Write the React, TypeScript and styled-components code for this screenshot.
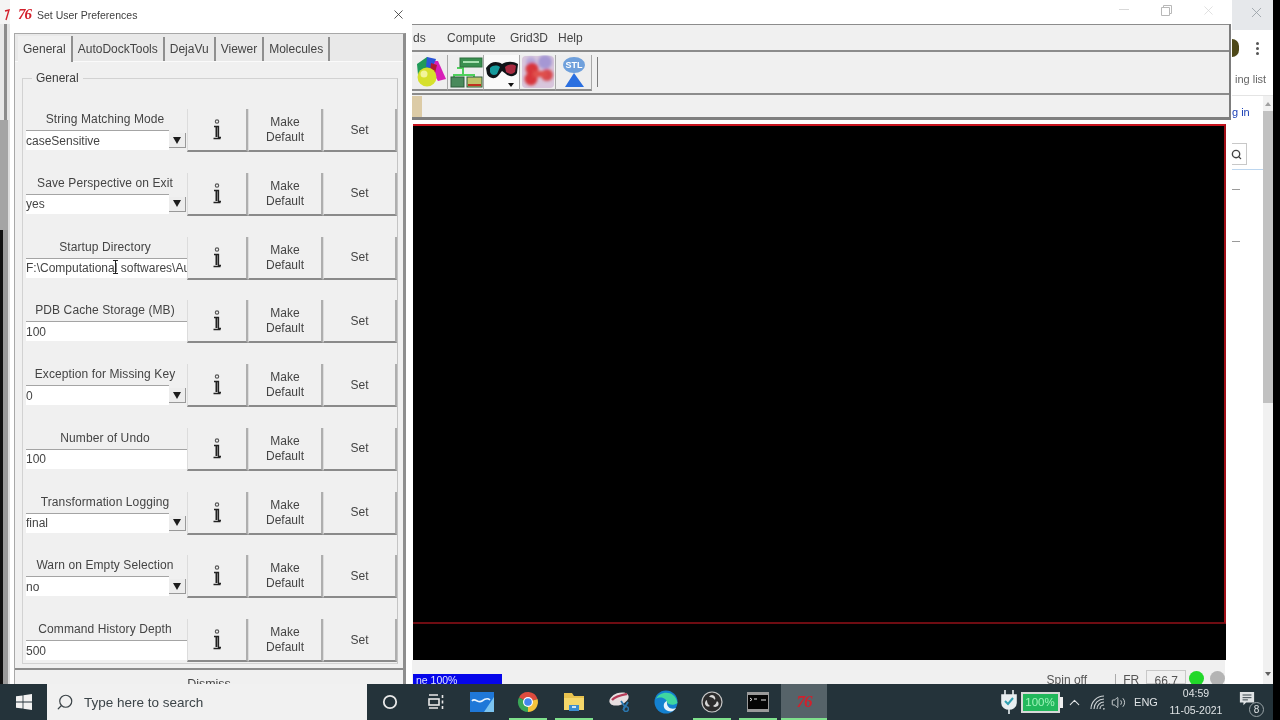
import React from 'react';
import styled, { createGlobalStyle } from 'styled-components';
import { Search, X, ChevronUp, Volume2 } from 'lucide-react';

const GlobalStyle = createGlobalStyle`
  html, body {
    margin: 0;
    padding: 0;
    background: #000;
  }
  * {
    box-sizing: border-box;
  }
`;

const Screen = styled.div`
  width: 1280px;
  height: 720px;
  display: flex;
  overflow: hidden;
  background: #000;
  font-family: "Liberation Sans", Arial, sans-serif;
  color: #3c3c3c;
  filter: blur(0.5px);
`;

const Workspace = styled.div`
  width: 1273px;
  display: flex;
  flex-direction: column;
`;

const Desk = styled.div`
  height: 684px;
  display: flex;
  overflow: hidden;
`;

const Sliver = styled.div`
  width: 10px;
  flex: none;
  display: flex;
  flex-direction: column;
`;

const SliverTop = styled.div`
  height: 24px;
  background: #f4f4f4;
`;

const SliverMid = styled.div`
  height: 96px;
  background: linear-gradient(90deg, #e8e8e8 0 4px, #8c8c8c 4px 7px, #e4e4e4 7px);
`;

const SliverGrey = styled.div`
  height: 110px;
  background: linear-gradient(90deg, #a4a4a4 0 8px, #dcdcdc 8px);
`;

const SliverBottom = styled.div`
  flex: 1;
  background: linear-gradient(90deg, #101010 0 3px, #9a9a9a 3px 8px, #dcdcdc 8px);
`;

/* preferences dialog */
const Dialog = styled.div`
  width: 402px;
  flex: none;
  background: #fff;
  padding: 0 6px 0 4px;
  display: flex;
  flex-direction: column;
`;

const TitleBar = styled.div`
  height: 33px;
  flex: none;
  margin: 0 -6px 0 -4px;
  padding: 0 6px 4px 8px;
  display: flex;
  align-items: center;
  font-size: 10.5px;
  color: #404040;
`;

const FeatherLogo = styled.span<{ $size: number }>`
  font-family: "Liberation Serif", serif;
  font-style: italic;
  font-weight: bold;
  font-size: ${p => p.$size}px;
  letter-spacing: -1px;
  color: #d3202c;
`;

const TitleText = styled.span`
  margin-left: 6px;
  flex: 1;
`;

const Panel = styled.div`
  flex: 1;
  border: 1px solid #a8a8a8;
  border-right: 3px solid #8e8e8e;
  background: #f0f0f0;
  display: flex;
  flex-direction: column;
`;

const TabStrip = styled.div`
  height: 28px;
  flex: none;
  padding-left: 3px;
  display: flex;
  align-items: flex-end;
  background: #e9e9e9;
  border-bottom: 1px solid #fafafa;
`;

const Tab = styled.div<{ $active?: boolean }>`
  height: ${p => (p.$active ? 26 : 24)}px;
  padding: 0 5px;
  margin-bottom: ${p => (p.$active ? -1 : 0)}px;
  display: flex;
  align-items: center;
  background: ${p => (p.$active ? '#f0f0f0' : '#e9e9e9')};
  border-right: 2px solid #8f8f8f;
  font-size: 12px;
  color: #444;
`;

const PanelBody = styled.div`
  flex: 1;
  padding: 9px 5px 0 7px;
  display: flex;
  flex-direction: column;
`;

const Group = styled.fieldset`
  margin: 0;
  padding: 0 0 3px 3px;
  min-width: 0;
  border: 1px solid #d2d2d2;
  border-right: 1px solid #c4c4c4;
`;

const GroupLegend = styled.legend`
  margin-left: 6px;
  padding: 0 4px;
  font-size: 12px;
  line-height: 14px;
  color: #3c3c3c;
`;

const RowList = styled.div`
  margin-top: 23px;
  display: flex;
  flex-direction: column;
  gap: 21.75px;
`;

const PrefRow = styled.div`
  height: 42px;
  display: flex;
  position: relative;
`;

const PrefField = styled.div`
  width: 161px;
  flex: none;
  display: flex;
  flex-direction: column;
`;

const PrefLabel = styled.div`
  height: 22px;
  padding-right: 3px;
  line-height: 22px;
  text-align: center;
  font-size: 12px;
  letter-spacing: 0.1px;
  white-space: nowrap;
  color: #444;
`;

const FieldBox = styled.div`
  height: 20px;
  display: flex;
  align-items: center;
  overflow: hidden;
  background: #fff;
  border-top: 1px solid #a4a4a4;
  font-size: 12px;
  white-space: nowrap;
  color: #444;
`;

const ComboRow = styled.div`
  display: flex;
  align-items: flex-end;
`;

const ComboArrow = styled.div`
  width: 17px;
  height: 15px;
  flex: none;
  margin: 0 1px 2px 0;
  background: #ededed;
  border-right: 1px solid #999;
  border-bottom: 1px solid #999;
  display: flex;
  align-items: center;
  justify-content: center;

  &::after {
    content: '';
    border-left: 4px solid transparent;
    border-right: 4px solid transparent;
    border-top: 7px solid #1c1c1c;
  }
`;

const ButtonGroup = styled.div`
  flex: 1;
  margin-top: 1px;
  display: grid;
  grid-template-columns: 61px 75px 74px;
`;

const PrefButton = styled.div`
  height: 43px;
  padding-top: 1px;
  display: flex;
  align-items: center;
  justify-content: center;
  text-align: center;
  font-size: 12px;
  line-height: 15px;
  color: #444;
  background: #f0f0f0;
  border-left: 1px solid #dcdcdc;
  border-right: 2px solid #aeaeae;
  border-bottom: 2px solid #8a8a8a;
`;

const Cursor = styled.svg`
  position: absolute;
  left: 86px;
  top: 24px;
`;

const DismissBar = styled.div`
  margin: 4px -5px 0 -7px;
  padding-top: 7px;
  border-top: 2px solid #8c8c8c;
  text-align: center;
  font-size: 12.5px;
  color: #444;
`;

/* main application window */
const AppWindow = styled.div`
  width: 820px;
  flex: none;
  background: #fff;
  display: flex;
  flex-direction: column;
`;

const WindowControls = styled.div`
  height: 24px;
  flex: none;
  padding-right: 3px;
  display: flex;
  justify-content: flex-end;
  align-items: flex-start;
`;

const WindowControl = styled.div`
  width: 42px;
  height: 20px;
  display: flex;
  align-items: center;
  justify-content: center;
  color: #cfcfcf;
`;

const ChromeStack = styled.div`
  height: 96px;
  flex: none;
  margin-right: 1px;
  border-right: 2px solid #7d7d7d;
  border-bottom: 3px solid #7f7f7f;
  display: flex;
  flex-direction: column;
  background: #f0f0f0;
`;

const MenuBar = styled.div`
  height: 28px;
  flex: none;
  display: flex;
  align-items: center;
  border-top: 1px solid #8c8c8c;
  border-bottom: 2px solid #8c8c8c;
  font-size: 12px;
  color: #444;
`;

const MenuItem = styled.span<{ $w: number; $inset?: number }>`
  width: ${p => p.$w}px;
  padding-left: ${p => p.$inset ?? 0}px;
  flex: none;
`;

const ToolBar = styled.div`
  height: 43px;
  flex: none;
  padding-top: 3px;
  display: flex;
  align-items: flex-start;
  border-bottom: 2px solid #8c8c8c;
`;

const ToolCell = styled.div<{ $light?: boolean }>`
  width: 36px;
  height: 36px;
  flex: none;
  display: flex;
  align-items: center;
  justify-content: center;
  background: ${p => (p.$light ? '#fafafa' : '#eeeeee')};
  border-bottom: 2px solid #8c8c8c;
  border-right: 1px solid #a8a8a8;
`;

const ToolGrip = styled.div`
  width: 1px;
  height: 30px;
  margin: 2px 0 0 5px;
  background: #7c7c7c;
`;

const InfoStrip = styled.div`
  flex: 1;
  display: flex;
  padding-top: 1px;
`;

const TanSwatch = styled.div`
  width: 10px;
  background: #dccba6;
`;

const CanvasArea = styled.div`
  height: 536px;
  flex: none;
  margin: 4px 6px 0 1px;
  background: #000;
`;

const RedFrame = styled.div`
  height: 500px;
  border-top: 2px solid #c8141e;
  border-right: 2px solid #a01018;
  border-bottom: 2px solid #6e0c12;
`;

const StatusBar = styled.div`
  flex: 1;
  background: #f0f0f0;
  margin-right: 7px;
  padding: 14px 0 0 1px;
  display: flex;
  overflow: hidden;
  font-size: 12px;
  color: #555;
`;

const ProgressBar = styled.div`
  width: 89px;
  height: 14px;
  padding-left: 3px;
  line-height: 12px;
  font-size: 10.5px;
  color: #dfe4ff;
  background: #0606ea;
`;

const SpinBox = styled.div`
  width: 70px;
  margin-left: 545px;
  white-space: nowrap;
  line-height: 12px;
  border-right: 1px solid #aaa;
`;

const FrameRate = styled.div`
  display: flex;
  gap: 7px;
  margin-left: 7px;
  line-height: 12px;
`;

const RateBox = styled.div`
  width: 40px;
  margin-top: -4px;
  padding-top: 4px;
  text-align: center;
  border: 1px solid #c8c8c8;
`;

const Lamp = styled.div<{ $color: string }>`
  width: 15px;
  height: 15px;
  margin: -3px 0 0 ${p => (p.$color === 'green' ? 3 : 6)}px;
  border-radius: 50%;
  background: ${p => (p.$color === 'green' ? '#22d82a' : '#b4b4b4')};
`;

/* browser window behind */
const Browser = styled.div`
  width: 41px;
  flex: none;
  display: flex;
  flex-direction: column;
  background: #fff;
`;

const BrowserTabs = styled.div`
  height: 30px;
  flex: none;
  padding: 4px 8px 0 0;
  display: flex;
  justify-content: flex-end;
  align-items: flex-start;
  color: #9aa0a6;
  background: #e6e8eb;
`;

const BrowserTools = styled.div`
  height: 36px;
  flex: none;
  padding: 0 14px 0 0;
  display: flex;
  align-items: center;
  justify-content: space-between;
`;

const Avatar = styled.div`
  width: 7px;
  height: 18px;
  border-radius: 0 9px 9px 0;
  background: #4e4818;
`;

const Kebab = styled.div`
  display: flex;
  flex-direction: column;
  gap: 2px;

  span {
    width: 3px;
    height: 3px;
    border-radius: 50%;
    background: #555;
  }
`;

const BookmarkBar = styled.div`
  height: 30px;
  flex: none;
  padding: 7px 0 0 3px;
  border-bottom: 1px solid #e4e4e4;
  font-size: 11px;
  color: #666;
  white-space: nowrap;
  overflow: hidden;
`;

const BrowserPage = styled.div`
  flex: 1;
  display: flex;
`;

const PageColumn = styled.div`
  width: 31px;
  flex: none;
  padding-top: 10px;
  display: flex;
  flex-direction: column;
`;

const LinkText = styled.div`
  font-size: 11px;
  line-height: 13px;
  color: #1a3fb5;
`;

const SearchBox = styled.div`
  width: 15px;
  height: 22px;
  margin-top: 24px;
  display: flex;
  align-items: center;
  border: 1px solid #c8c8c8;
  border-left: none;
  color: #444;
`;

const SearchMark = styled(Search)`
  margin-left: -1px;
`;

const BlueRule = styled.div`
  height: 1px;
  margin-top: 4px;
  background: #bcd6ef;
`;

const Tick = styled.div<{ $top: number }>`
  width: 8px;
  height: 1px;
  margin-top: ${p => p.$top}px;
  background: #9a9a9a;
`;

const Scrollbar = styled.div`
  width: 10px;
  flex: none;
  display: flex;
  flex-direction: column;
  align-items: center;
  background: #f1f1f1;
`;

const ScrollUp = styled.div`
  height: 15px;
  padding-top: 6px;

  &::after {
    content: '';
    display: block;
    border-left: 3px solid transparent;
    border-right: 3px solid transparent;
    border-bottom: 4px solid #a0a0a0;
  }
`;

const ScrollThumb = styled.div`
  width: 100%;
  height: 292px;
  background: #c1c1c1;
`;

const ScrollDown = styled.div`
  margin-top: auto;
  margin-bottom: 8px;
  border-left: 3px solid transparent;
  border-right: 3px solid transparent;
  border-top: 4px solid #606060;
`;

/* taskbar */
const Taskbar = styled.div`
  height: 36px;
  flex: none;
  display: flex;
  background: #24333a;
  color: #e6e6e6;
`;

const StartButton = styled.div`
  width: 47px;
  flex: none;
  display: flex;
  align-items: center;
  justify-content: center;
`;

const SearchField = styled.div`
  width: 320px;
  flex: none;
  padding-left: 9px;
  display: flex;
  align-items: center;
  gap: 10px;
  background: #f1f1f1;
  color: #3c4448;
  font-size: 13.5px;
`;

const SearchGlass = styled(Search)`
  transform: scaleX(-1);
`;

const TaskButton = styled.div<{ $running?: boolean; $active?: boolean }>`
  width: 46px;
  flex: none;
  display: flex;
  align-items: center;
  justify-content: center;
  position: relative;
  background: ${p => (p.$active ? '#566369' : 'transparent')};

  &::after {
    content: '';
    display: ${p => (p.$running ? 'block' : 'none')};
    position: absolute;
    bottom: 0;
    left: ${p => (p.$active ? 0 : 4)}px;
    right: ${p => (p.$active ? 0 : 4)}px;
    height: 2px;
    background: #7fe08c;
  }
`;

const Tray = styled.div`
  margin-left: auto;
  display: flex;
  align-items: center;
  padding-right: 1px;
`;

const TrayCell = styled.div<{ $w: number }>`
  width: ${p => p.$w}px;
  flex: none;
  display: flex;
  align-items: center;
  justify-content: center;
  color: #dfe3e5;
`;

const BatteryShell = styled.div`
  width: 39px;
  height: 21px;
  padding: 1px;
  background: #22b85c;
  border: 2px solid #d8d8d8;
  position: relative;
  text-align: center;
  font-size: 11.5px;
  line-height: 14px;
  color: #a0f4ba;

  &::after {
    content: '';
    position: absolute;
    right: -5px;
    top: 3px;
    width: 3px;
    height: 11px;
    background: #f0f0f0;
  }
`;

const EngLabel = styled.span`
  font-size: 11px;
`;

const Clock = styled.div`
  font-size: 10.5px;
  line-height: 17px;
  text-align: center;
  white-space: nowrap;
`;

const NotifyWrap = styled.div`
  position: relative;
  height: 22px;
  width: 22px;
`;

const NotifyBadge = styled.div`
  position: absolute;
  right: -3px;
  bottom: -4px;
  width: 15px;
  height: 15px;
  border-radius: 50%;
  background: #24333a;
  border: 1px solid #9aa4a8;
  text-align: center;
  font-size: 10px;
  line-height: 13px;
`;

/* drawings */
const InfoGlyph = () => (
  <svg width="10" height="22" viewBox="0 0 10 22">
    <circle cx="5" cy="2.6" r="1.7" fill="none" stroke="#555" strokeWidth="1.1" />
    <path d="M2 7.5H6.5V18.5H9M1.5 19.5H8.5" fill="none" stroke="#222" strokeWidth="1.3" />
    <path d="M4.5 8V18" stroke="#222" strokeWidth="2" />
  </svg>
);

const SliverMark = () => (
  <svg width="10" height="24" viewBox="0 0 10 24">
    <path d="M5 11L9 10L6 20" fill="none" stroke="#d3202c" strokeWidth="1.4" />
  </svg>
);

const ShapesIcon = () => (
  <svg width="32" height="34" viewBox="0 0 32 34">
    <polygon points="3,9 13,2 19,6 15,20 4,20" fill="#1f9a58" />
    <polygon points="13,2 22,4 19,14 12,12" fill="#2a55d8" />
    <polygon points="21,6 24,6 32,24 24,26 18,16" fill="#d81fb8" />
    <polygon points="17,8 23,10 21,18 16,16" fill="#b01830" />
    <circle cx="13" cy="22" r="9.5" fill="#d6e02c" />
    <circle cx="10" cy="19" r="3.5" fill="#f2f59a" />
  </svg>
);

const TreeIcon = () => (
  <svg width="34" height="32" viewBox="0 0 34 32">
    <path d="M8 12H14V19H5V22M14 19H25V22M14 8V12" fill="none" stroke="#4fd05c" strokeWidth="2" />
    <rect x="11" y="2" width="22" height="9" fill="#3a9050" stroke="#2c6e3c" />
    <rect x="14" y="5" width="16" height="2" fill="#a7e0b0" />
    <rect x="2" y="21" width="13" height="10" fill="#4a8a5c" stroke="#2c5a3a" />
    <rect x="18" y="21" width="15" height="10" fill="#bfc26a" stroke="#2c5a3a" />
    <rect x="19" y="28" width="13" height="2" fill="#c03020" />
  </svg>
);

const GlassesIcon = () => (
  <svg width="34" height="34" viewBox="0 0 34 34">
    <path d="M1 13C6 6 12 6 17 9C22 6 28 6 33 9L32 18C30 22 24 22 21 19L17 16L13 21C9 25 4 23 2 19Z" fill="#101418" />
    <path d="M5 13C8 10 12 10 15 12L12 19C9 21 6 20 5 17Z" fill="#159a9c" />
    <path d="M20 12C24 9 28 9 31 11L30 17C27 20 24 19 21 17Z" fill="#a82a40" />
    <polygon points="23,28 29,28 26,32" fill="#111" />
  </svg>
);

const MoleculeIcon = () => (
  <svg width="34" height="34" viewBox="0 0 34 34">
    <defs>
      <filter id="soft" x="-20%" y="-20%" width="140%" height="140%">
        <feGaussianBlur stdDeviation="1.4" />
      </filter>
    </defs>
    <rect x="1" y="1" width="32" height="32" rx="4" fill="#d8c6dc" />
    <g filter="url(#soft)">
      <circle cx="24" cy="7" r="7" fill="#8f83d0" opacity="0.7" />
      <circle cx="10" cy="7" r="5" fill="#9f93d8" opacity="0.6" />
      <circle cx="11" cy="14" r="6.5" fill="#d8343a" />
      <circle cx="10" cy="24" r="6.5" fill="#d8343a" />
      <circle cx="26" cy="20" r="6" fill="#d8464c" />
      <rect x="12" y="16" width="13" height="6" fill="#e0504c" />
    </g>
  </svg>
);

const PyramidIcon = () => (
  <svg width="32" height="32" viewBox="0 0 32 32">
    <ellipse cx="16" cy="9" rx="11" ry="8" fill="#6fa0dc" />
    <text x="16" y="12" textAnchor="middle" fontSize="9" fontWeight="bold" fill="#fff" fontFamily="Liberation Sans">STL</text>
    <polygon points="16,17 26,31 7,31" fill="#2a6fe0" />
  </svg>
);

const WindowsLogo = () => (
  <svg width="16" height="16" viewBox="0 0 16 16">
    <path d="M0 2.3L6.6 1.4V7.5H0ZM7.4 1.3L16 0V7.5H7.4ZM0 8.4H6.6V14.6L0 13.7ZM7.4 8.4H16V16L7.4 14.8Z" fill="#f2f2f2" />
  </svg>
);

const TaskViewIcon = () => (
  <svg width="18" height="18" viewBox="0 0 18 18" fill="none" stroke="#e8e8e8" strokeWidth="1.6">
    <path d="M2 2H11M2 15H11" />
    <rect x="2" y="6" width="10" height="6" />
    <path d="M15.5 2V5M15.5 7.5V10.5M15.5 13V16" />
  </svg>
);

const ChartIcon = () => (
  <svg width="24" height="20" viewBox="0 0 24 20">
    <rect width="24" height="20" fill="#1f78d8" />
    <path d="M14 20L24 5V20Z" fill="#7cc4f0" />
    <path d="M2 9C5 5 8 12 12 9S18 6 20 8" fill="none" stroke="#e8f4ff" strokeWidth="1.6" />
  </svg>
);

const ChromeIcon = () => (
  <svg width="22" height="22" viewBox="0 0 22 22">
    <path d="M11 11L2 6.5A10 10 0 0 1 20.5 8Z" fill="#dd4b3e" />
    <path d="M11 11L20.5 8A10 10 0 0 1 11 21Z" fill="#f5c33b" />
    <path d="M11 11L11 21A10 10 0 0 1 2 6.5Z" fill="#3aa757" />
    <circle cx="11" cy="11" r="5" fill="#fff" />
    <circle cx="11" cy="11" r="3.8" fill="#4487ee" />
  </svg>
);

const FolderIcon = () => (
  <svg width="22" height="20" viewBox="0 0 22 20">
    <path d="M1 1H9L11 4H21V17H1Z" fill="#e8c24e" />
    <rect x="1" y="6" width="20" height="12" fill="#f5d76a" />
    <rect x="6" y="13" width="10" height="6" fill="#3d8ecf" />
    <rect x="9" y="14" width="4" height="2" fill="#cfe6f6" />
  </svg>
);

const SnipIcon = () => (
  <svg width="24" height="22" viewBox="0 0 24 22">
    <ellipse cx="11" cy="8" rx="10" ry="6" fill="#e8dfe0" transform="rotate(-20 11 8)" />
    <path d="M4 9C8 5 14 4 19 3" stroke="#b43a56" strokeWidth="2.4" fill="none" />
    <path d="M13 10L17 16M20 11L15 19" stroke="#2b78b0" strokeWidth="1.8" fill="none" />
    <circle cx="18" cy="18" r="2.4" fill="none" stroke="#2b78b0" strokeWidth="1.4" />
  </svg>
);

const EdgeIcon = () => (
  <svg width="24" height="24" viewBox="0 0 24 24">
    <circle cx="12" cy="12" r="11.5" fill="#1481d0" />
    <path d="M2 9C5 1 21 -1 23.5 13C20 16 14 15 13 12C12 8 6 6 2 9Z" fill="#3fd6a0" />
    <path d="M13 11C9 12 8 19 14 21C18 22.5 21 20 22 18C18 20 12 18 13 11Z" fill="#fff" opacity="0.9" />
  </svg>
);

const ObsIcon = () => (
  <svg width="22" height="22" viewBox="0 0 22 22">
    <circle cx="11" cy="11" r="10" fill="#2c2c2c" stroke="#c8c8c8" strokeWidth="1.2" />
    <path d="M11 4A3.5 3.5 0 0 1 14 9A7 7 0 0 0 8 6A3.5 3.5 0 0 1 11 4Z" fill="#d8d8d8" />
    <path d="M17.5 14A3.5 3.5 0 0 1 12 15A7 7 0 0 0 16 10A3.5 3.5 0 0 1 17.5 14Z" fill="#d8d8d8" />
    <path d="M4.5 14A3.5 3.5 0 0 1 6 9A7 7 0 0 0 9 15A3.5 3.5 0 0 1 4.5 14Z" fill="#d8d8d8" />
  </svg>
);

const TerminalIcon = () => (
  <svg width="22" height="20" viewBox="0 0 22 20">
    <rect width="22" height="20" fill="#9a9a9a" />
    <rect x="1" y="3" width="20" height="14" fill="#050505" />
    <path d="M3 6L5 7.5L3 9M7 7H10M14 8H19" stroke="#e8e8e8" strokeWidth="1" fill="none" />
  </svg>
);

const PlugIcon = () => (
  <svg width="16" height="24" viewBox="0 0 16 24">
    <path d="M4 0V5M12 0V5M1 5H15V13C15 17 11 19 8 19C5 19 1 17 1 13ZM8 19V24" fill="#e8eef0" stroke="#e8eef0" strokeWidth="1.6" />
    <path d="M4 11L7 14L12 8" fill="none" stroke="#2f9fb0" strokeWidth="2" />
  </svg>
);

const WifiIcon = () => (
  <svg width="16" height="16" viewBox="0 0 16 16" fill="none" stroke="#cfd4d6" strokeWidth="1.1">
    <path d="M2 15A13 13 0 0 1 15 2M5 15A10 10 0 0 1 15 5M8 15A7 7 0 0 1 15 8M11 15A4 4 0 0 1 15 11" />
    <path d="M14 15H15V14" />
  </svg>
);

const NotifyIcon = () => (
  <svg width="16" height="16" viewBox="0 0 18 18">
    <path d="M1 1H17V13H8L5 16V13H1Z" fill="#dfe3e5" />
    <path d="M4 4.5H14M4 7.5H14M4 10H10" stroke="#24333a" strokeWidth="1" />
  </svg>
);

type Pref = { label: string; value: string; combo: boolean; cursor?: boolean };

const prefs: Pref[] = [
  { label: 'String Matching Mode', value: 'caseSensitive', combo: true },
  { label: 'Save Perspective on Exit', value: 'yes', combo: true },
  { label: 'Startup Directory', value: 'F:\\Computational softwares\\AutoDock', combo: false, cursor: true },
  { label: 'PDB Cache Storage (MB)', value: '100', combo: false },
  { label: 'Exception for Missing Key', value: '0', combo: true },
  { label: 'Number of Undo', value: '100', combo: false },
  { label: 'Transformation Logging', value: 'final', combo: true },
  { label: 'Warn on Empty Selection', value: 'no', combo: true },
  { label: 'Command History Depth', value: '500', combo: false },
];

const tabs = ['General', 'AutoDockTools', 'DejaVu', 'Viewer', 'Molecules'];

const PrefItem = ({ pref }: { pref: Pref }) => (
  <PrefRow>
    <PrefField>
      <PrefLabel>{pref.label}</PrefLabel>
      {pref.combo ? (
        <ComboRow>
          <FieldBox style={{ flex: 1 }}>{pref.value}</FieldBox>
          <ComboArrow />
        </ComboRow>
      ) : (
        <FieldBox>{pref.value}</FieldBox>
      )}
    </PrefField>
    <ButtonGroup>
      <PrefButton><InfoGlyph /></PrefButton>
      <PrefButton>Make<br />Default</PrefButton>
      <PrefButton>Set</PrefButton>
    </ButtonGroup>
    {pref.cursor && (
      <Cursor width="7" height="14" viewBox="0 0 7 14">
        <path d="M1 0.5H6M1 13.5H6M3.5 1V13" stroke="#222" strokeWidth="1" fill="none" />
      </Cursor>
    )}
  </PrefRow>
);

const App = () => {
  return (
    <>
      <GlobalStyle />
      <Screen>
        <Workspace>
          <Desk>
            <Sliver>
              <SliverTop><SliverMark /></SliverTop>
              <SliverMid />
              <SliverGrey />
              <SliverBottom />
            </Sliver>
            <Dialog>
              <TitleBar>
                <FeatherLogo $size={15}>76</FeatherLogo>
                <TitleText>Set User Preferences</TitleText>
                <X size={15} strokeWidth={1.3} color="#333" />
              </TitleBar>
              <Panel>
                <TabStrip>
                  {tabs.map((t, i) => (
                    <Tab key={t} $active={i === 0}>{t}</Tab>
                  ))}
                </TabStrip>
                <PanelBody>
                  <Group>
                    <GroupLegend>General</GroupLegend>
                    <RowList>
                      {prefs.map(p => (
                        <PrefItem key={p.label} pref={p} />
                      ))}
                    </RowList>
                  </Group>
                  <DismissBar>Dismiss</DismissBar>
                </PanelBody>
              </Panel>
            </Dialog>
            <AppWindow>
              <WindowControls>
                <WindowControl>
                  <svg width="10" height="2"><rect width="10" height="1" fill="#d8d8d8" /></svg>
                </WindowControl>
                <WindowControl>
                  <svg width="11" height="11" viewBox="0 0 11 11" fill="none" stroke="#b8b8b8">
                    <path d="M2.5 2.5V0.5H10.5V8.5H8.5M0.5 2.5H8.5V10.5H0.5Z" />
                  </svg>
                </WindowControl>
                <WindowControl><X size={15} strokeWidth={1} /></WindowControl>
              </WindowControls>
              <ChromeStack>
                <MenuBar>
                  <MenuItem $w={35} $inset={1}>ds</MenuItem>
                  <MenuItem $w={63}>Compute</MenuItem>
                  <MenuItem $w={48}>Grid3D</MenuItem>
                  <MenuItem $w={30}>Help</MenuItem>
                </MenuBar>
                <ToolBar>
                  <ToolCell><ShapesIcon /></ToolCell>
                  <ToolCell><TreeIcon /></ToolCell>
                  <ToolCell $light><GlassesIcon /></ToolCell>
                  <ToolCell><MoleculeIcon /></ToolCell>
                  <ToolCell><PyramidIcon /></ToolCell>
                  <ToolGrip />
                </ToolBar>
                <InfoStrip><TanSwatch /></InfoStrip>
              </ChromeStack>
              <CanvasArea>
                <RedFrame />
              </CanvasArea>
              <StatusBar>
                <ProgressBar>ne 100%</ProgressBar>
                <SpinBox>Spin off</SpinBox>
                <FrameRate>
                  FR
                  <RateBox>66.7</RateBox>
                </FrameRate>
                <Lamp $color="green" />
                <Lamp $color="grey" />
              </StatusBar>
            </AppWindow>
            <Browser>
              <BrowserTabs><X size={17} strokeWidth={1.2} /></BrowserTabs>
              <BrowserTools>
                <Avatar />
                <Kebab><span /><span /><span /></Kebab>
              </BrowserTools>
              <BookmarkBar>ing list</BookmarkBar>
              <BrowserPage>
                <PageColumn>
                  <LinkText>g in</LinkText>
                  <SearchBox><SearchMark size={11} strokeWidth={3} /></SearchBox>
                  <BlueRule />
                  <Tick $top={19} />
                  <Tick $top={51} />
                </PageColumn>
                <Scrollbar>
                  <ScrollUp />
                  <ScrollThumb />
                  <ScrollDown />
                </Scrollbar>
              </BrowserPage>
            </Browser>
          </Desk>
          <Taskbar>
            <StartButton><WindowsLogo /></StartButton>
            <SearchField>
              <SearchGlass size={18} strokeWidth={1.6} />
              Type here to search
            </SearchField>
            <TaskButton>
              <svg width="16" height="16" viewBox="0 0 16 16">
                <circle cx="8" cy="8" r="6.2" fill="none" stroke="#e8e8e8" strokeWidth="1.8" />
              </svg>
            </TaskButton>
            <TaskButton><TaskViewIcon /></TaskButton>
            <TaskButton><ChartIcon /></TaskButton>
            <TaskButton $running><ChromeIcon /></TaskButton>
            <TaskButton $running><FolderIcon /></TaskButton>
            <TaskButton><SnipIcon /></TaskButton>
            <TaskButton><EdgeIcon /></TaskButton>
            <TaskButton $running><ObsIcon /></TaskButton>
            <TaskButton $running><TerminalIcon /></TaskButton>
            <TaskButton $running $active><FeatherLogo $size={17}>76</FeatherLogo></TaskButton>
            <Tray>
              <TrayCell $w={18}><PlugIcon /></TrayCell>
              <TrayCell $w={44}><BatteryShell>100%</BatteryShell></TrayCell>
              <TrayCell $w={24}><ChevronUp size={17} strokeWidth={1.5} /></TrayCell>
              <TrayCell $w={22}><WifiIcon /></TrayCell>
              <TrayCell $w={20}><Volume2 size={15} strokeWidth={1.4} /></TrayCell>
              <TrayCell $w={36}><EngLabel>ENG</EngLabel></TrayCell>
              <TrayCell $w={64}><Clock>04:59<br />11-05-2021</Clock></TrayCell>
              <TrayCell $w={44}>
                <NotifyWrap>
                  <NotifyIcon />
                  <NotifyBadge>8</NotifyBadge>
                </NotifyWrap>
              </TrayCell>
            </Tray>
          </Taskbar>
        </Workspace>
      </Screen>
    </>
  );
};

export default App;
